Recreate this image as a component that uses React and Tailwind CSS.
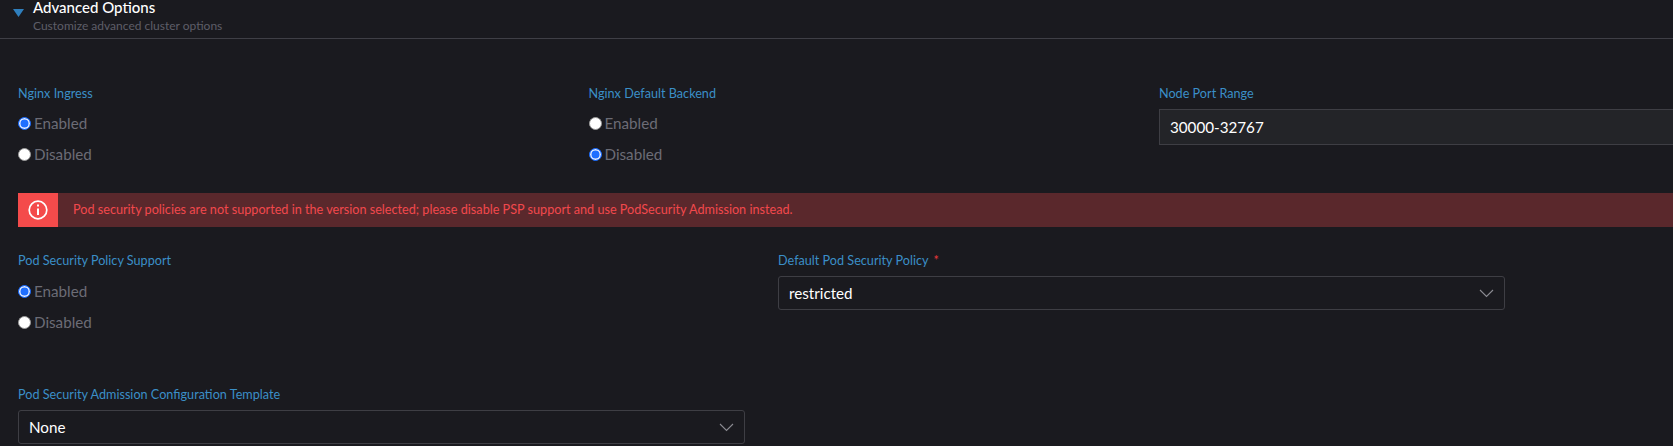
const Radio = ({ on, label }) => (
  <label className="flex items-center h-[31px]">
    {on ? (
      <span className="w-[13px] h-[13px] rounded-full bg-[#1f6fff] border-[1.5px] border-[#1f6fff] shadow-[inset_0_0_0_1.5px_#e8eefc]" />
    ) : (
      <span className="w-[13px] h-[13px] rounded-full bg-white border border-[#9a9a9a]" />
    )}
    <span className="ml-[3px] text-[15.2px] text-[#6c6c76]">{label}</span>
  </label>
);

const Label = ({ children }) => (
  <div className="text-[12.65px] leading-[18px] text-[#3b8fc7]">{children}</div>
);

const RadioGroup = ({ title, value }) => (
  <div>
    <Label>{title}</Label>
    <div className="mt-[5px]">
      <Radio on={value === "enabled"} label="Enabled" />
      <Radio on={value === "disabled"} label="Disabled" />
    </div>
  </div>
);

const Select = ({ value }) => (
  <div className="flex items-center justify-between h-[34px] rounded-[3px] border border-[#3e3e44] pl-[10px] pr-[10px]">
    <span className="text-[15.2px] text-white">{value}</span>
    <svg width="15" height="9" viewBox="0 0 15 9" fill="none" stroke="#8b8b92" strokeWidth="1.1">
      <path d="M1 1l6.5 6.5L14 1" />
    </svg>
  </div>
);

export default function App() {
  return (
    <div
      className="w-full h-[446px] overflow-hidden bg-[#1a1a1f]"
      style={{ fontFamily: "Lato, sans-serif" }}
    >
      <div className="h-[39px] border-b border-[#3f3f46] flex pl-[13px]">
        <svg width="11" height="8" viewBox="0 0 11 8" className="mt-[9px]">
          <path d="M0 0h11L5.5 8z" fill="#2f7fbd" />
        </svg>
        <div className="ml-[9px] -mt-[3px]">
          <div className="text-[15px] leading-[20px] font-medium text-white">Advanced Options</div>
          <div className="mt-[1px] text-[12px] leading-[15px] text-[#5e5e68]">Customize advanced cluster options</div>
        </div>
      </div>

      <div className="pl-[18px] w-[1700px]">
        <div className="flex gap-[32.5px] mt-[46px]">
          <div className="w-[538px]">
            <RadioGroup title="Nginx Ingress" value="enabled" />
          </div>
          <div className="w-[538px]">
            <RadioGroup title="Nginx Default Backend" value="disabled" />
          </div>
          <div className="w-[538px]">
            <Label>Node Port Range</Label>
            <div className="mt-[6px] h-[36px] border border-[#3e3e44] bg-[#232428] flex items-center pl-[10px] text-[15.2px] text-white">
              30000-32767
            </div>
          </div>
        </div>

        <div className="flex mt-[23px] h-[34px] bg-[#5a282c] w-[1655px]">
          <div className="w-[40px] bg-[#f44b4b] flex items-center justify-center">
            <svg width="20" height="20" viewBox="0 0 20 20" fill="none" stroke="white">
              <circle cx="10" cy="10" r="8.8" strokeWidth="1.7" />
              <path d="M10 8.5v6.5" strokeWidth="2" />
              <path d="M10 4.6v2" strokeWidth="2" />
            </svg>
          </div>
          <div className="pl-[15px] pt-[1px] flex items-center text-[12.65px] text-[#f2484c]">
            Pod security policies are not supported in the version selected; please disable PSP support and use PodSecurity Admission instead.
          </div>
        </div>

        <div className="flex gap-[33px] mt-[25px]">
          <div className="w-[727px]">
            <div>
              <Label>Pod Security Policy Support</Label>
              <div className="mt-[6px]">
                <Radio on label="Enabled" />
                <Radio label="Disabled" />
              </div>
            </div>
          </div>
          <div className="w-[727px]">
            <div className="text-[12.65px] leading-[18px] text-[#3b8fc7]">
              Default Pod Security Policy <span className="text-[#e5383b] ml-[2px]">*</span>
            </div>
            <div className="mt-[6px]">
              <Select value="restricted" />
            </div>
          </div>
        </div>

        <div className="w-[727px] mt-[48px]">
          <Label>Pod Security Admission Configuration Template</Label>
          <div className="mt-[6px]">
            <Select value="None" />
          </div>
        </div>
      </div>
    </div>
  );
}
